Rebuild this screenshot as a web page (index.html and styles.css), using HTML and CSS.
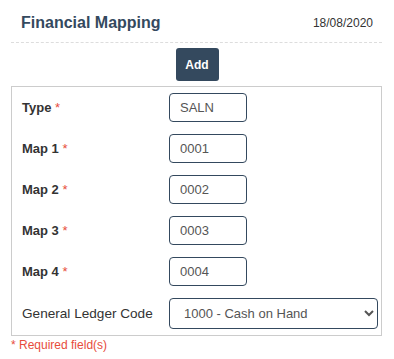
FILE: index.html
```html
<!DOCTYPE html>
<html lang="en">
<head>
  <meta charset="UTF-8">
  <title>Financial Mapping</title>
  <link rel="stylesheet" href="styles.css">
</head>
<body>
  <div class="panel">
    <div class="panel-head">
      <h2 class="title">Financial Mapping</h2>
      <span class="date">18/08/2020</span>
    </div>

    <div class="actions">
      <button class="btn" type="button">Add</button>
    </div>

    <form class="mapping">
      <label class="lbl">Type <span class="req">*</span></label>
      <div><input class="field" type="text" value="SALN"></div>

      <label class="lbl">Map 1 <span class="req">*</span></label>
      <div><input class="field" type="text" value="0001"></div>

      <label class="lbl">Map 2 <span class="req">*</span></label>
      <div><input class="field" type="text" value="0002"></div>

      <label class="lbl">Map 3 <span class="req">*</span></label>
      <div><input class="field" type="text" value="0003"></div>

      <label class="lbl">Map 4 <span class="req">*</span></label>
      <div><input class="field" type="text" value="0004"></div>

      <label class="lbl lbl-plain">General Ledger Code</label>
      <div>
        <select class="field field-select">
          <option>1000 - Cash on Hand</option>
          <option>1010 - Cash at Bank</option>
        </select>
      </div>
    </form>

    <p class="note">* Required field(s)</p>
  </div>
</body>
</html>
```

FILE: styles.css
```css
html {
  box-sizing: border-box;
}

*, *:before, *:after {
  box-sizing: inherit;
}

body {
  margin: 0;
  font-family: "Liberation Sans", Arial, sans-serif;
  color: #333;
  background: #fff;
}

.panel {
  padding: 0 12px 0 11px;
}

.panel-head {
  display: flex;
  justify-content: space-between;
  align-items: center;
  height: 43px;
  padding: 4px 9px 0 10px;
  border-bottom: 1px dashed #ddd;
}

.title {
  margin: 0;
  font-size: 16px;
  font-weight: bold;
  color: #34495e;
}

.date {
  font-size: 12px;
  color: #333;
}

.actions {
  display: flex;
  justify-content: center;
  padding: 5px 0 5px 1px;
}

.btn {
  width: 43px;
  height: 33px;
  padding: 0;
  border: 0;
  border-radius: 3px;
  background: #34495e;
  color: #fff;
  font-family: inherit;
  font-size: 12px;
  font-weight: bold;
}

.mapping {
  display: grid;
  grid-template-columns: 147px 1fr;
  row-gap: 12px;
  align-items: center;
  padding: 6px 4px 6px 10px;
  border: 1px solid #ccc;
}

.lbl {
  font-size: 13px;
  font-weight: bold;
  color: #333;
}

.lbl-plain {
  font-weight: normal;
  font-size: 13.6px;
}

.req {
  color: #e74c3c;
  font-weight: normal;
}

.field {
  display: block;
  width: 78px;
  height: 29px;
  padding: 0 10px;
  border: 1px solid #34495e;
  border-radius: 4px;
  font-family: inherit;
  font-size: 13px;
  color: #555;
  background: #fff;
}

.field-select {
  width: 209px;
  height: 31px;
  padding: 0 6px 0 10px;
}

.note {
  margin: 2px 0 0;
  font-size: 12px;
  color: #e74c3c;
}
```
